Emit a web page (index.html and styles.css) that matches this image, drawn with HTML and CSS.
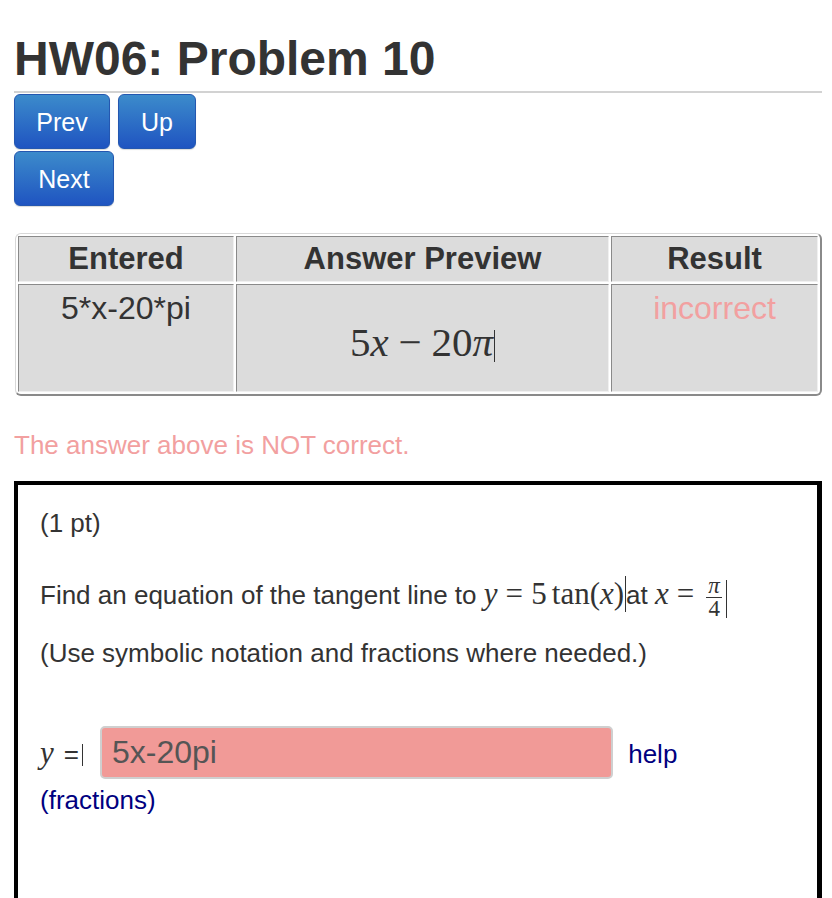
FILE: index.html
```html
<!DOCTYPE html>
<html>
<head>
<meta charset="utf-8">
<title>HW06: Problem 10</title>
<link rel="stylesheet" href="styles.css">
</head>
<body>
<h1 class="title">HW06: Problem 10</h1>
<div class="nav">
  <a class="btn btn-prev">Prev</a>
  <a class="btn btn-up">Up</a>
  <a class="btn btn-next">Next</a>
</div>
<table class="results">
  <tr class="head-row">
    <th class="c1">Entered</th>
    <th class="c2">Answer Preview</th>
    <th class="c3">Result</th>
  </tr>
  <tr class="body-row">
    <td class="entered">5*x-20*pi</td>
    <td class="preview"><span class="pmath">5<i>x</i><span class="minus">−</span>20<i>π</i></span><span class="caret caret-lg"></span></td>
    <td class="result">incorrect</td>
  </tr>
</table>
<div class="msg">The answer above is NOT correct.</div>
<div class="problem">
  <p class="pts">(1 pt)</p>
  <p class="q">Find an equation of the tangent line to <span class="m"><i>y</i><span class="eq">=</span>5<span class="thin"></span>tan(<i>x</i>)</span><span class="caret"></span>at <span class="m"><i>x</i><span class="eq">=</span></span><span class="frac"><span class="num"><i>π</i></span><span class="den">4</span></span><span class="caret caret-end"></span></p>
  <p class="note">(Use symbolic notation and fractions where needed.)</p>
  <p class="answer"><span class="m"><i>y</i></span><span class="ylab">=</span><span class="caret caret-sm"></span><input class="ans" type="text" value="5x-20pi"> <a class="help">help (fractions)</a></p>
</div>
</body>
</html>
```
FILE: styles.css
```css
html, body {
  margin: 0;
  background: #fff;
}
body {
  padding: 0 10px 0 14px;
  font-family: "Liberation Sans", Arial, sans-serif;
  font-size: 26px;
  line-height: 34px;
  color: #333;
}
.title {
  margin: 32px 0 0;
  padding-bottom: 6px;
  border-bottom: 2px solid #d2d2d2;
  font-size: 48px;
  line-height: 53px;
  font-weight: bold;
  color: #333;
}
.nav {
  display: flex;
  flex-wrap: wrap;
  width: 190px;
  gap: 2px 8px;
  margin-top: 1px;
}
.btn {
  display: flex;
  align-items: center;
  justify-content: center;
  box-sizing: border-box;
  height: 55px;
  font-size: 25px;
  color: #fff;
  border: 1px solid #2457b0;
  border-radius: 6px;
  background: linear-gradient(#3c8bcb, #1f54c1);
  box-shadow: 0 1px 1px rgba(0,0,0,0.15);
}
.btn-prev { width: 96px; }
.btn-up { width: 78px; }
.btn-next { width: 100px; }

.results {
  margin: 27px 0 0 1px;
  width: 807px;
  table-layout: fixed;
  border-collapse: separate;
  border-spacing: 2px;
  border-style: solid;
  border-width: 1px 2px 2px 1px;
  border-color: #d8d8d8 #8a8a8a #8a8a8a #d8d8d8;
  border-radius: 6px;
  background: #fff;
}
.results th, .results td {
  background: #dcdcdc;
  border: 1px solid;
  border-color: #8a8a8a #f0f0f0 #f0f0f0 #8a8a8a;
  padding: 0 4px;
  text-align: center;
}
.results th {
  height: 44px;
  font-size: 31px;
  line-height: 36px;
  font-weight: bold;
  vertical-align: middle;
}
.c1 { width: 206px; }
.c2 { width: 363px; }
.c3 { width: 197px; }
.results td {
  height: 108px;
  font-size: 32px;
  line-height: 38px;
  vertical-align: top;
  padding-top: 4px;
  box-sizing: border-box;
}
.results td.preview {
  vertical-align: middle;
  padding-top: 10px;
}
.pmath {
  font-family: "Liberation Serif", "Times New Roman", serif;
  font-size: 41px;
}
.pmath i { font-style: italic; }
.minus { margin: 0 0.24em; }
.result { color: #f2a0a0; }

.caret {
  display: inline-block;
  width: 1px;
  height: 36px;
  background: #333;
  vertical-align: -8px;
  margin-left: 1px;
}
.caret-lg {
  height: 32px;
  vertical-align: -6px;
}
.caret-sm {
  height: 22px;
  vertical-align: -3px;
  margin-left: 3px;
}
.caret-end {
  height: 38px;
  vertical-align: -14px;
  margin-left: 4px;
}

.msg {
  margin-top: 32px;
  color: #f2a0a0;
}
.problem {
  margin-top: 19px;
  border: 4px solid #000;
  border-right-width: 5px;
  padding: 21px 22px 0;
  min-height: 500px;
}
.problem p { margin: 0; }
.problem .q { margin-top: 35px; }
.problem .note { margin-top: 16px; }
.problem .answer { margin-top: 56px; }
.m {
  font-family: "Liberation Serif", "Times New Roman", serif;
  font-size: 31px;
}
.ylab { margin-left: 10px; }
.eq { margin: 0 0.26em; }
.thin { display: inline-block; width: 0.167em; }
.frac {
  display: inline-flex;
  flex-direction: column;
  align-items: center;
  font-family: "Liberation Serif", "Times New Roman", serif;
  font-size: 23px;
  line-height: 22px;
  vertical-align: 11px;
  margin-left: 4px;
}
.num {
  border-bottom: 1px solid #333;
  padding: 0 2px;
}
.ans {
  box-sizing: border-box;
  width: 513px;
  height: 53px;
  margin: 0 8px 4px 17px;
  padding: 0 10px;
  font-family: "Liberation Sans", Arial, sans-serif;
  font-size: 32px;
  color: #555;
  background: #f19a97;
  border: 2px solid #cfcfcf;
  border-radius: 5px;
  outline: none;
}
.help {
  color: #000080;
}
```
